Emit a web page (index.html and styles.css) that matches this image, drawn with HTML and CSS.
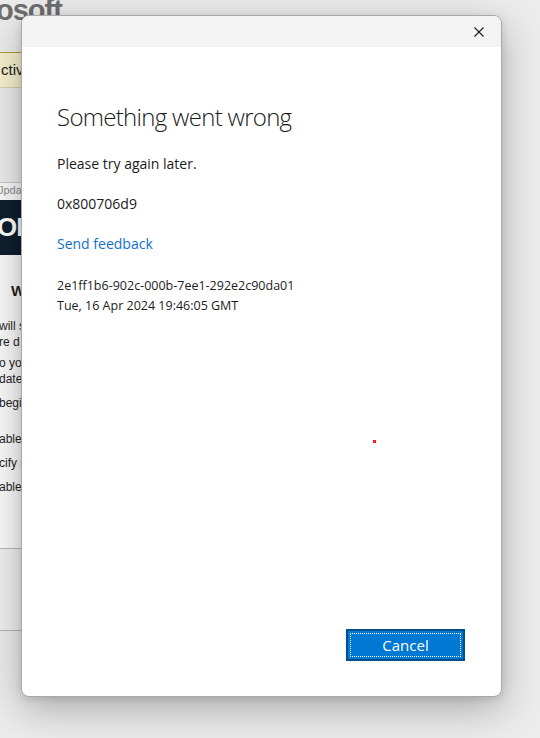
FILE: index.html
```html
<!DOCTYPE html>
<html lang="en">
<head>
<meta charset="utf-8">
<title>Something went wrong</title>
<link rel="stylesheet" href="styles.css">
</head>
<body>
<div class="desktop">
  <div class="bgwin">
    <div class="bg-brand">osoft</div>
    <div class="bg-banner">ctiv</div>
    <div class="bg-gap"></div>
    <div class="bg-page">
      <div class="bg-crumb">Jpda</div>
      <div class="bg-hero">OI</div>
      <div class="bg-body">
        <div class="bg-head">W</div>
        <div class="bg-line l1">will s</div>
        <div class="bg-line">re d</div>
        <div class="bg-line l2">o you</div>
        <div class="bg-line">date</div>
        <div class="bg-line l3">begi</div>
        <div class="bg-line l4">able</div>
        <div class="bg-line l5">cify r</div>
        <div class="bg-line l5">able</div>
      </div>
    </div>
    <div class="bg-foot"></div>
  </div>

  <div class="dialog">
    <div class="titlebar">
      <button class="close" aria-label="Close">
        <svg width="10" height="10" viewBox="0 0 10 10"><path d="M0.5 0.5 L9.5 9.5 M9.5 0.5 L0.5 9.5" stroke="#1b1b1b" stroke-width="1.1" fill="none"/></svg>
      </button>
    </div>
    <div class="content">
      <h1 class="title">Something went wrong</h1>
      <p class="msg">Please try again later.</p>
      <p class="msg gap">0x800706d9</p>
      <a class="link" href="#">Send feedback</a>
      <div class="meta">
        <div>2e1ff1b6-902c-000b-7ee1-292e2c90da01</div>
        <div>Tue, 16 Apr 2024 19:46:05 GMT</div>
      </div>
      <span class="dot"></span>
    </div>
    <div class="footer">
      <button class="cancel"><span class="focus">Cancel</span></button>
    </div>
  </div>
</div>
</body>
</html>
```

FILE: styles.css
```css
* { box-sizing: border-box; }
html, body {
  margin: 0;
  padding: 0;
  width: 540px;
  height: 738px;
  overflow: hidden;
  background: #ececec;
  font-family: "Open Sans", "Noto Sans", sans-serif;
}
.desktop {
  position: relative;
  width: 540px;
  height: 738px;
}

/* background window (partially hidden behind the dialog) */
.bgwin {
  position: absolute;
  left: 0;
  top: 0;
  width: 90px;
  height: 631px;
  display: flex;
  flex-direction: column;
  background: transparent;
  border-bottom: 1px solid #b5b5b5;
  overflow: hidden;
}
.bg-brand {
  height: 52px;
  font-family: "Liberation Sans", sans-serif;
  font-weight: bold;
  font-size: 29px;
  line-height: 20px;
  color: #6e6e6e;
  margin-left: -4px;
  letter-spacing: -1px;
  white-space: nowrap;
}
.bg-banner {
  height: 36px;
  background: #f7f1cf;
  border-top: 1px solid #b39a37;
  border-bottom: 1px solid #d8d0a8;
  font-family: "Liberation Sans", sans-serif;
  font-size: 15px;
  line-height: 34px;
  color: #222;
  padding-left: 1px;
}
.bg-gap {
  height: 95px;
  background: #ececec;
  border-bottom: 1px solid #c9c9c9;
}
.bg-page {
  flex: 1;
  background: #fafafa;
  display: flex;
  flex-direction: column;
}
.bg-crumb {
  height: 17px;
  font-family: "Liberation Sans", sans-serif;
  font-size: 11px;
  line-height: 14px;
  color: #8a8a8a;
  margin-left: -2px;
}
.bg-hero {
  height: 55px;
  background: #0e1f2e;
  color: #fff;
  font-family: "Liberation Sans", sans-serif;
  font-weight: bold;
  font-size: 26px;
  line-height: 55px;
  margin-left: -3px;
  letter-spacing: -1px;
}
.bg-body {
  font-family: "Liberation Sans", sans-serif;
  font-size: 12px;
  line-height: 16px;
  color: #1e1e1e;
}
.bg-head {
  font-weight: bold;
  font-size: 15px;
  margin: 28px 0 0 11px;
}
.bg-line { white-space: nowrap; margin-left: -1px; }
.bg-line.l1 { margin-top: 19px; }
.bg-line.l2 { margin-top: 5px; }
.bg-line.l3 { margin-top: 8px; }
.bg-line.l4 { margin-top: 20px; }
.bg-line.l5 { margin-top: 8px; }
.bg-foot {
  height: 82px;
  background: #f0f0f0;
  border-top: 1px solid #b8b8b8;
}

/* dialog */
.dialog {
  position: absolute;
  left: 21px;
  top: 15px;
  width: 481px;
  height: 682px;
  background: #fff;
  border: 1px solid #a9a9a9;
  border-radius: 8px;
  box-shadow: 0 12px 40px rgba(0,0,0,0.28), 0 2px 8px rgba(0,0,0,0.12);
  display: flex;
  flex-direction: column;
  overflow: hidden;
}
.titlebar {
  height: 31px;
  background: #f3f3f3;
  display: flex;
  justify-content: flex-end;
  align-items: center;
  flex: none;
}
.close {
  width: 46px;
  height: 31px;
  border: 0;
  background: transparent;
  padding: 0;
  display: flex;
  align-items: center;
  justify-content: center;
  margin-right: -1px;
}
.content {
  position: relative;
  flex: 1;
  padding: 54px 35px 0 35px;
  color: #1b1b1b;
}
.title {
  margin: 0;
  font-weight: 300;
  font-size: 24px;
  line-height: 32px;
  letter-spacing: -0.7px;
  color: #1b1b1b;
}
.msg {
  margin: 21px 0 0 0;
  font-size: 14px;
  line-height: 20px;
}
.msg.gap { margin-top: 20px; }
.link {
  display: block;
  margin-top: 20px;
  font-size: 14px;
  line-height: 20px;
  color: #1170cc;
  text-decoration: none;
}
.meta {
  margin-top: 22px;
  font-size: 12.5px;
  line-height: 20px;
}
.dot {
  position: absolute;
  left: 351px;
  top: 393px;
  width: 3px;
  height: 3px;
  background: #ff1a1a;
}
.footer {
  flex: none;
  display: flex;
  justify-content: flex-end;
  padding: 0 36px 35px 0;
}
.cancel {
  width: 119px;
  height: 32px;
  background: #0078d4;
  border: 2px solid #004e8c;
  padding: 2px;
  cursor: pointer;
}
.focus {
  display: flex;
  align-items: center;
  justify-content: center;
  height: 100%;
  border: 1px dotted #ffffff;
  color: #fff;
  font-family: "Open Sans", "Noto Sans", sans-serif;
  font-size: 15px;
}
```
